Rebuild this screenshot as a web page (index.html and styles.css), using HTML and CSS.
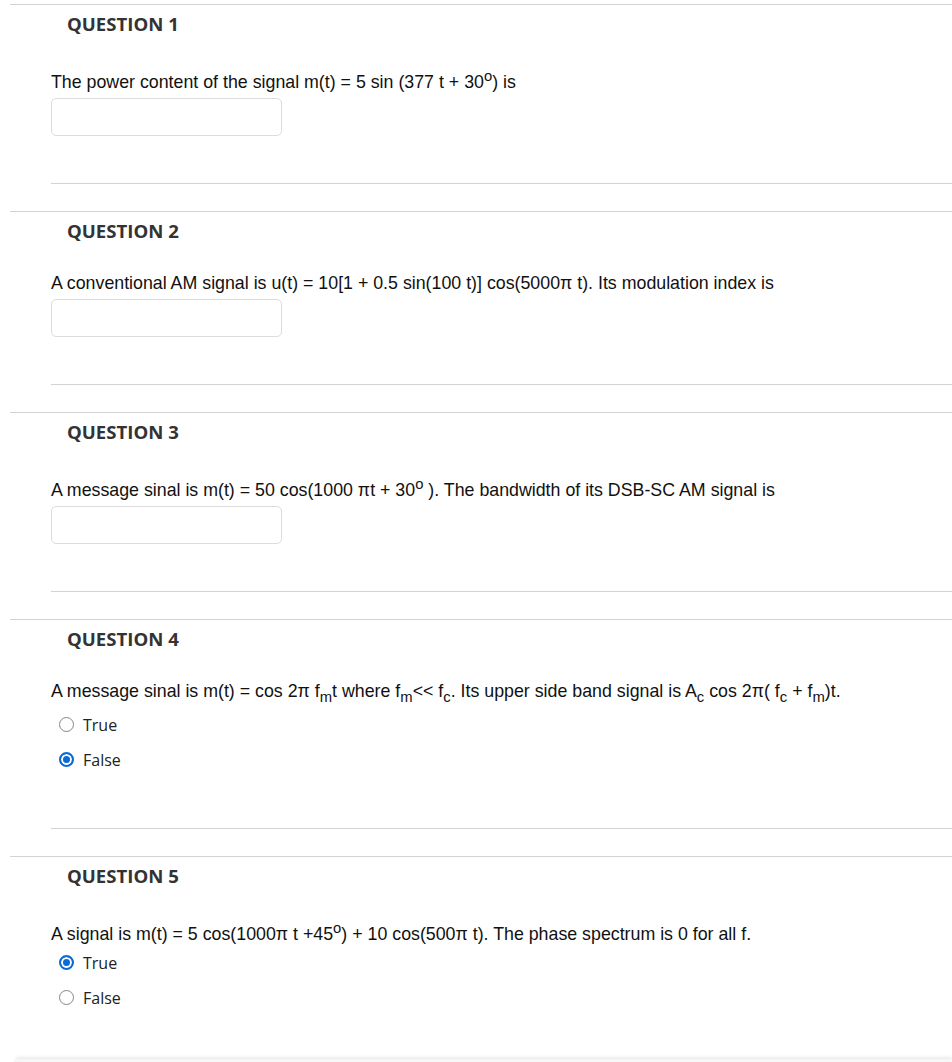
FILE: index.html
```html
<!DOCTYPE html>
<html>
<head>
  <meta charset="UTF-8">
  <meta name="viewport" content="width=device-width, initial-scale=1.0">
  <title>Questions</title>
  <link rel="stylesheet" href="styles.css">
</head>
<body>

  <div class="question">
    <h3 class="q-title">QUESTION 1</h3>
    <div class="q-body">
      <p class="q-text">The power content of the signal m(t) = 5 sin (377 t + 30<sup>o</sup>) is</p>
      <input type="text" class="answer">
    </div>
  </div>

  <div class="question">
    <h3 class="q-title">QUESTION 2</h3>
    <div class="q-body">
      <p class="q-text">A conventional AM signal is u(t) = 10[1 + 0.5 sin(100 t)] cos(5000π t). Its modulation index is</p>
      <input type="text" class="answer">
    </div>
  </div>

  <div class="question">
    <h3 class="q-title">QUESTION 3</h3>
    <div class="q-body">
      <p class="q-text">A message sinal is m(t) = 50 cos(1000 πt + 30<sup>o</sup> ). The bandwidth of its DSB-SC AM signal is</p>
      <input type="text" class="answer">
    </div>
  </div>

  <div class="question">
    <h3 class="q-title">QUESTION 4</h3>
    <div class="q-body q-choice">
      <p class="q-text">A message sinal is m(t) = cos 2π f<sub>m</sub>t where f<sub>m</sub>&lt;&lt; f<sub>c</sub>. Its upper side band signal is A<sub>c</sub> cos 2π( f<sub>c</sub> + f<sub>m</sub>)t.</p>
      <label class="option"><input type="radio" name="q4"> True</label>
      <label class="option"><input type="radio" name="q4" checked> False</label>
    </div>
  </div>

  <div class="question">
    <h3 class="q-title">QUESTION 5</h3>
    <div class="q-body q-choice">
      <p class="q-text">A signal is m(t) = 5 cos(1000π t +45<sup>o</sup>) + 10 cos(500π t). The phase spectrum is 0 for all f.</p>
      <label class="option"><input type="radio" name="q5" checked> True</label>
      <label class="option"><input type="radio" name="q5"> False</label>
    </div>
  </div>

  <div class="submit-bar"></div>

</body>
</html>
```

FILE: styles.css
```css
body {
  margin: 0;
  padding: 4px 0 0 10px;
  font-family: "Liberation Sans", Arial, sans-serif;
  color: #111;
  background-color: #fff;
}

.question {
  border-top: 1px solid #d3d3d3;
}

.q-title {
  margin: 0;
  padding: 7px 0 0 57px;
  font-family: "Open Sans", sans-serif;
  font-size: 18.6px;
  font-weight: 700;
  line-height: 24px;
  color: #333;
}

.q-body {
  margin: 30px 0 27px 41px;
  padding-bottom: 47px;
  border-bottom: 1px solid #d3d3d3;
}

.q-choice {
  padding-bottom: 51px;
}

.q-text {
  margin: 0;
  font-size: 17.8px;
  line-height: 20px;
}

.answer {
  display: block;
  box-sizing: border-box;
  width: 231px;
  height: 38px;
  margin-top: 6px;
  border: 1px solid #dcdcdc;
  border-radius: 5px;
}

.option {
  display: flex;
  align-items: center;
  gap: 9px;
  height: 35px;
  padding-left: 8px;
  font-family: "Open Sans", sans-serif;
  font-size: 16px;
  color: #222;
}

.option:first-of-type {
  margin-top: 1px;
}

.option input {
  appearance: none;
  box-sizing: border-box;
  width: 15px;
  height: 15px;
  margin: 0;
  border: 1.5px solid #858585;
  border-radius: 50%;
}

.option input:checked {
  border: 2px solid #0b6ad6;
  box-shadow: inset 0 0 0 2px #fff;
  background-color: #0b6ad6;
}

.submit-bar {
  position: fixed;
  left: 16px;
  right: 0;
  bottom: -20px;
  height: 23px;
  background-color: #f6f6f6;
  box-shadow: 0 -1px 4px rgba(0, 0, 0, 0.12);
}
```
